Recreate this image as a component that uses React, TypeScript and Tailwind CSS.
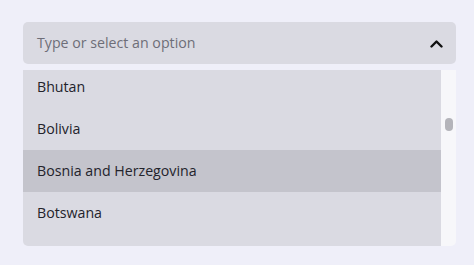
const options = ["Bhutan", "Bolivia", "Bosnia and Herzegovina", "Botswana"];

export default function App() {
  return (
    <div className="w-[474px] h-[265px] bg-[#efeff9] pl-[23px] pr-[18px] pt-[22px] font-['Open_Sans',sans-serif] overflow-hidden">
      <div className="h-[42px] rounded-[5px] bg-[#dadae2] flex items-center pl-[14px] pr-[13px]">
        <span className="flex-1 text-[14.2px] text-[#6e6e78]">Type or select an option</span>
        <svg width="13" height="9" viewBox="0 0 13 9" fill="none">
          <path d="M1.5 7.5 L6.5 2.5 L11.5 7.5" stroke="#111" strokeWidth="2.4" strokeLinecap="round" strokeLinejoin="round" />
        </svg>
      </div>
      <div className="mt-[6px] h-[176px] flex rounded-b-[5px] overflow-hidden">
        <div className="flex-1 bg-[#dadae2] overflow-hidden">
          <div className="-mt-[4px] pb-[14px]">
            {options.map((o) => (
              <div
                key={o}
                className={`h-[42px] flex items-center pl-[14px] text-[14.2px] text-[#23232b] ${o === "Bosnia and Herzegovina" ? "bg-[#c4c4cc]" : ""}`}
              >
                {o}
              </div>
            ))}
          </div>
        </div>
        <div className="w-[15px] bg-[#f7f7fa] pt-[48px] flex justify-center">
          <div className="w-[8px] h-[13px] rounded-full bg-[#b4b4ba]" />
        </div>
      </div>
    </div>
  );
}
